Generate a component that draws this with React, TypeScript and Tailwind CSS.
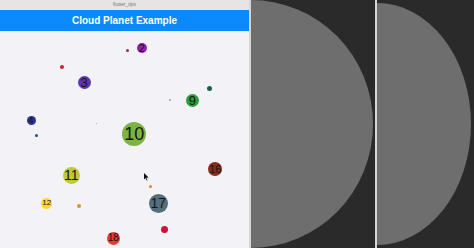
const planets = [
  { x: 141.7, y: 47.3, r: 5, c: "#8e24aa", n: "2", f: 11 },
  { x: 84, y: 81, r: 6.5, c: "#5e35b1", n: "3", f: 13 },
  { x: 192.3, y: 99.3, r: 6.5, c: "#2e9e3a", n: "9", f: 13 },
  { x: 31, y: 119, r: 4.5, c: "#283593", n: "4", f: 9 },
  { x: 134.3, y: 133, r: 12, c: "#7cb342", n: "10", f: 18 },
  { x: 71.3, y: 174, r: 8.5, c: "#c0ca33", n: "11", f: 14 },
  { x: 215.3, y: 168.3, r: 7, c: "#8a2a1c", n: "16", f: 11 },
  { x: 46.7, y: 202.3, r: 5.5, c: "#fdd835", n: "12", f: 8 },
  { x: 158.3, y: 202, r: 9.5, c: "#546e7a", n: "17", f: 14 },
  { x: 113.3, y: 237, r: 6.5, c: "#e53935", n: "18", f: 10 },
];

const dots = [
  { x: 127.7, y: 49, r: 1.5, c: "#b0283a" },
  { x: 62, y: 66, r: 2, c: "#c62828" },
  { x: 209, y: 87.3, r: 2.5, c: "#1b5e4a" },
  { x: 170, y: 99.3, r: 1, c: "#9e9e9e" },
  { x: 96.7, y: 122.7, r: 0.8, c: "#9e9e9e" },
  { x: 36.3, y: 134.3, r: 1.5, c: "#1e4f8f" },
  { x: 150, y: 185.7, r: 1.5, c: "#e08a1e" },
  { x: 79, y: 204.7, r: 2, c: "#d8952a" },
  { x: 164.7, y: 228.7, r: 3.5, c: "#d0103a" },
];

const TOP = 31;

export default function App() {
  return (
    <div className="flex h-[248px] w-[474px] overflow-hidden bg-[#2a2a2a]" style={{ fontFamily: "'Liberation Sans', Arial, sans-serif" }}>
      <div className="flex w-[249px] flex-col bg-[#f3f2f6]">
        <div className="flex h-[10px] items-center justify-center bg-[#e6e4e4] text-[5px] text-[#777]">flutter_tips</div>
        <div className="flex h-[21px] items-center justify-center bg-[#0a8afc] text-[10px] font-semibold text-white">Cloud Planet Example</div>
        <div className="relative flex-1 border-t border-[#e8e8ee]">
          {dots.map((d, i) => (
            <div
              key={i}
              className="absolute rounded-full"
              style={{ left: d.x - d.r, top: d.y - TOP - d.r, width: d.r * 2, height: d.r * 2, background: d.c }}
            />
          ))}
          {planets.map((p) => (
            <div
              key={p.n}
              className="absolute flex items-center justify-center rounded-full leading-none text-[#161616]"
              style={{ left: p.x - p.r, top: p.y - TOP - p.r, width: p.r * 2, height: p.r * 2, background: p.c, fontSize: p.f }}
            >
              {p.n}
            </div>
          ))}
          <svg className="absolute left-[144px] top-[141px]" width="5" height="8" viewBox="0 0 5 8">
            <path d="M0 0 L0 6.5 L1.5 5 L2.7 7.6 L3.5 7.2 L2.4 4.7 L4.6 4.6 Z" fill="#111" />
          </svg>
        </div>
      </div>
      <div className="w-[2px] bg-[#d6d6d6]" />
      <div className="w-[124px]">
        <svg width="124" height="248" viewBox="0 0 124 248">
          <ellipse cx="0" cy="124" rx="122" ry="124" fill="#6e6e6e" />
        </svg>
      </div>
      <div className="w-[2px] bg-[#d6d6d6]" />
      <div className="flex-1">
        <svg width="97" height="248" viewBox="0 0 97 248">
          <ellipse cx="0" cy="124" rx="94" ry="121" fill="#6e6e6e" />
        </svg>
      </div>
    </div>
  );
}
